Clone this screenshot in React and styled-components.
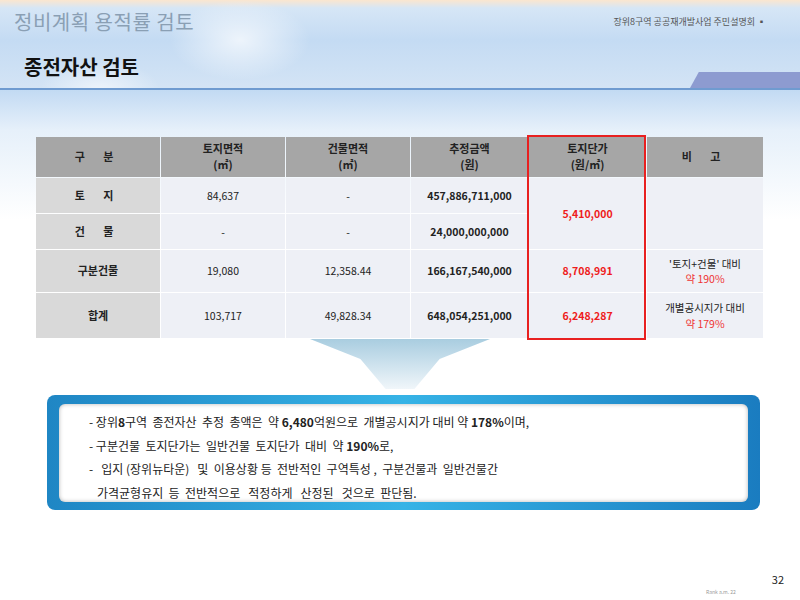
import React from "react";
import styled, { createGlobalStyle } from "styled-components";

const G = createGlobalStyle`
  html,body{margin:0;padding:0;}
  body{font-family:"Noto Sans CJK KR","Noto Sans",sans-serif;background:#fff;}
`;
const Page = styled.div`
  width:800px;height:600px;position:relative;overflow:hidden;
  background:linear-gradient(180deg,#cfe2f6 0px,#c2daf3 90px,#e6f0fa 130px,#ffffff 220px);
`;
const Header = styled.div`
  height:88px;position:relative;
  background:
    radial-gradient(ellipse 70px 40px at 240px 40px, rgba(255,255,255,.7), transparent),
    radial-gradient(ellipse 60px 30px at 100px 90px, rgba(255,255,255,.6), transparent),
    linear-gradient(180deg,#fbe6cf 0,#d6e6f6 8px,#c4dbf3 40px,#d4e4f5 90px);
  border-bottom:2px solid #6f9bd0;
`;
const TopRow = styled.div`
  display:flex;justify-content:space-between;align-items:center;padding:6px 14px 0 14px;height:30px;
`;
const SectionTitle = styled.div`font-size:20px;color:#8a9fb4;font-weight:400;letter-spacing:.5px;`;
const Sub = styled.div`font-size:9px;color:#555;margin-right:20px;`;
const Title = styled.div`font-size:20px;font-weight:700;color:#111;padding:16px 0 0 24px;`;
const Tab = styled.div`
  position:absolute;right:0;bottom:0;width:110px;height:16px;background:#8d9bd0;
  clip-path:polygon(8% 0,100% 0,100% 100%,0 100%);
`;
const Table = styled.div`
  position:relative;margin:47px 0 0 36px;width:726px;
  display:grid;grid-template-columns:124px 124px 124px 117px 117px 116px;
  grid-template-rows:40px 35px 35px 42px 45px;gap:1px 1px;
`;
const Cell = styled.div`
  display:flex;flex-direction:column;align-items:center;justify-content:center;text-align:center;
  background:${p=>p.head?"#a6a6a6":p.first?"#d9d9d9":"#eef0f6"};
  font-size:${p=>p.head||p.first?"11px":"10.5px"};
  font-weight:${p=>p.bold?700:400};
  color:${p=>p.red?"#ee1c1c":"#222"};
  line-height:1.45;letter-spacing:${p=>p.sp||0};
  grid-row:${p=>p.span||"auto"};
`;
const Red = styled.span`color:#ee3333;`;
const RedBox = styled.div`
  position:absolute;left:491px;width:115px;top:-2px;bottom:-2px;border:2px solid #e82020;pointer-events:none;
`;
const Arrow = styled.div`
  width:180px;height:50px;margin:1px auto 0 310px;
  background:linear-gradient(180deg,#a9cde0,#f0f6fa);
  clip-path:polygon(0 0,100% 0,72% 40%,58% 100%,42% 100%,28% 40%);
`;
const Frame = styled.div`
  margin:6px 0 0 47px;width:713px;height:115px;box-sizing:border-box;padding:9px 12px 8px 12px;border-radius:8px;
  background:linear-gradient(90deg,#1f86c4,#36b3e6 50%,#1a7cc0);
`;
const Inner = styled.div`
  background:#fff;border-radius:6px;height:100%;box-sizing:border-box;padding:6px 0 0 30px;
  box-shadow:inset 0 0 4px rgba(0,0,0,.3);
`;
const Line = styled.div`font-size:12px;color:#222;height:23.5px;line-height:23.5px;white-space:pre;padding-left:${p=>p.ind||0}px;`;
const PageNo = styled.div`position:absolute;right:16px;top:571px;font-size:11px;color:#222;`;
const Tiny = styled.div`position:absolute;left:706px;top:588px;font-size:5px;color:#999;`;

export default function App(){
  return <Page><G/>
    <Header>
      <TopRow><SectionTitle>정비계획 용적률 검토</SectionTitle><Sub>장위8구역 공공재개발사업 주민설명회 ▪</Sub></TopRow>
      <Title>종전자산 검토</Title>
      <Tab/>
    </Header>
    <Table>
      <Cell head bold sp="8px">구 분</Cell>
      <Cell head bold>토지면적<span>(㎡)</span></Cell>
      <Cell head bold>건물면적<span>(㎡)</span></Cell>
      <Cell head bold>추정금액<span>(원)</span></Cell>
      <Cell head bold>토지단가<span>(원/㎡)</span></Cell>
      <Cell head bold sp="8px">비 고</Cell>
      <Cell first bold sp="8px">토 지</Cell><Cell>84,637</Cell><Cell>-</Cell><Cell bold>457,886,711,000</Cell>
      <Cell bold red span="span 2">5,410,000</Cell><Cell span="span 2"></Cell>
      <Cell first bold sp="8px">건 물</Cell><Cell>-</Cell><Cell>-</Cell><Cell bold>24,000,000,000</Cell>
      <Cell first bold>구분건물</Cell><Cell>19,080</Cell><Cell>12,358.44</Cell><Cell bold>166,167,540,000</Cell>
      <Cell bold red>8,708,991</Cell><Cell>'토지+건물' 대비<Red>약 190%</Red></Cell>
      <Cell first bold>합계</Cell><Cell>103,717</Cell><Cell>49,828.34</Cell><Cell bold>648,054,251,000</Cell>
      <Cell bold red>6,248,287</Cell><Cell>개별공시지가 대비<Red>약 179%</Red></Cell>
      <RedBox/>
    </Table>
    <Arrow/>
    <Frame><Inner>
      <Line>- 장위<b>8</b>구역  종전자산  추정  총액은  약 <b>6,480</b>억원으로  개별공시지가 대비 약 <b>178%</b>이며,</Line>
      <Line>- 구분건물  토지단가는  일반건물  토지단가  대비  약 <b>190%</b>로,</Line>
      <Line>-   입지 (장위뉴타운)   및  이용상황 등  전반적인  구역특성 ,  구분건물과  일반건물간</Line>
      <Line ind={8}>가격균형유지  등  전반적으로   적정하게   산정된   것으로  판단됨.</Line>
    </Inner></Frame>
    <PageNo>32</PageNo>
    <Tiny>Rank a.m. 22</Tiny>
  </Page>;
}
